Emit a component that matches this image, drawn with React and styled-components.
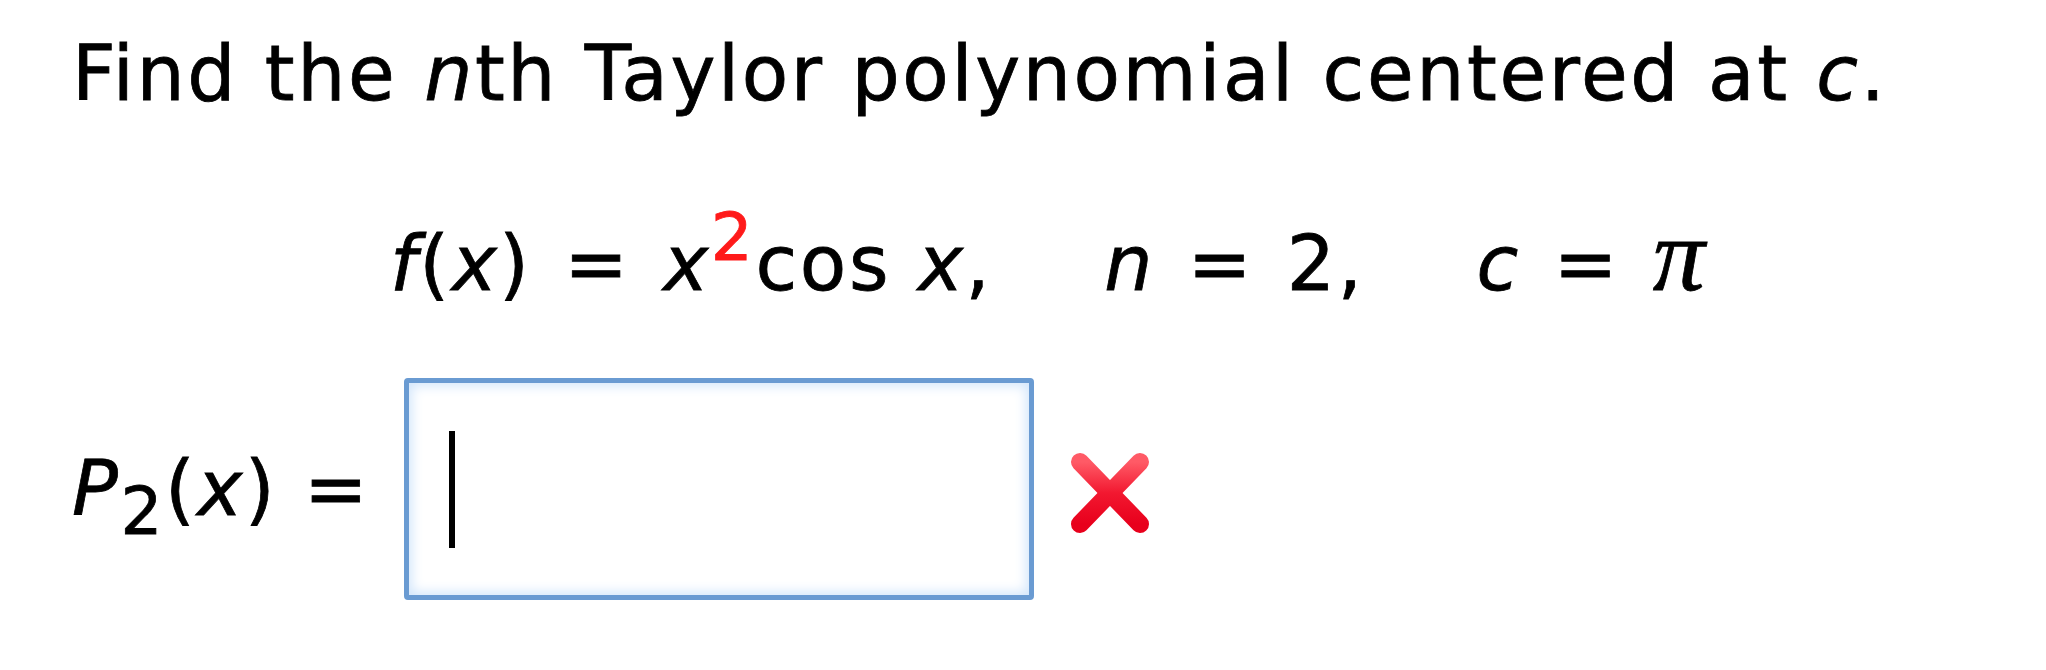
import React from 'react';
import styled, { createGlobalStyle } from 'styled-components';

const GlobalStyle = createGlobalStyle`
  html, body {
    margin: 0;
    padding: 0;
    background: #ffffff;
  }
  body {
    font-family: "DejaVu Sans", Verdana, sans-serif;
    color: #000000;
  }
`;

const Page = styled.div`
  width: 2046px;
  height: 670px;
  padding: 28px 0 0 72px;
  box-sizing: border-box;
  font-size: 76px;
  line-height: 92px;
  letter-spacing: 2.6px;
  -webkit-text-stroke: 0.8px #000000;
`;

const Heading = styled.div`
  white-space: nowrap;
`;

const Var = styled.i`
  font-style: oblique;
`;

const Eq = styled.span`
  margin: 0 6px;
`;

const Pi = styled.i`
  font-family: "Liberation Serif", "DejaVu Serif", serif;
  font-style: italic;
  font-size: 104px;
  line-height: 0;
`;

const Formula = styled.div`
  display: flex;
  align-items: baseline;
  margin-top: 98px;
  padding-left: 318px;
  white-space: pre;
`;

const Term = styled.span`
  margin-right: ${(p) => p.$gap || 0}px;
`;

const Sup = styled.span`
  font-size: 66px;
  line-height: 0;
  vertical-align: 30px;
  color: #ff1a1a;
  -webkit-text-stroke: 0.8px #ff1a1a;
`;

const Sub = styled.span`
  font-size: 66px;
  line-height: 0;
  vertical-align: -19px;
  margin-left: 0;
`;

const AnswerRow = styled.div`
  display: flex;
  align-items: center;
  margin-top: 68px;
`;

const Label = styled.span`
  white-space: pre;
  margin-right: 34px;
`;

const InputBox = styled.div`
  width: 630px;
  height: 222px;
  box-sizing: border-box;
  border: 5px solid #6a9bd2;
  border-radius: 4px;
  box-shadow: inset 0 0 12px 3px #d3e6fb;
  background: #ffffff;
  display: flex;
  align-items: center;
  padding-left: 40px;
`;

const Caret = styled.div`
  width: 6px;
  height: 117px;
  background: #000000;
`;

const WrongMark = styled.svg`
  margin-left: 34px;
  margin-top: 8px;
`;

export default function App() {
  return (
    <>
      <GlobalStyle />
      <Page>
        <Heading>
          Find the <Var>n</Var>th Taylor polynomial centered at <Var>c</Var>.
        </Heading>
        <Formula>
          <Term $gap={112}>
            <Var>f</Var>(<Var>x</Var>)<Eq> = </Eq><Var>x</Var>
            <Sup>2</Sup>cos <Var>x</Var>,
          </Term>
          <Term $gap={112}>
            <Var>n</Var>
            <Eq> = </Eq>2,
          </Term>
          <Term>
            <Var>c</Var>
            <Eq> = </Eq>
            <Pi>π</Pi>
          </Term>
        </Formula>
        <AnswerRow>
          <Label>
            <Var>P</Var>
            <Sub>2</Sub>(<Var>x</Var>) =
          </Label>
          <InputBox>
            <Caret />
          </InputBox>
          <WrongMark width="84" height="84" viewBox="0 0 84 84">
            <defs>
              <linearGradient id="xg" x1="0" y1="0" x2="0" y2="1">
                <stop offset="0" stopColor="#ff5a66" />
                <stop offset="0.5" stopColor="#f21830" />
                <stop offset="1" stopColor="#e8001c" />
              </linearGradient>
            </defs>
            <g stroke="url(#xg)" strokeWidth="18" strokeLinecap="round" fill="none">
              <path d="M12 11 L72 73" />
              <path d="M72 11 L12 73" />
            </g>
          </WrongMark>
        </AnswerRow>
      </Page>
    </>
  );
}
